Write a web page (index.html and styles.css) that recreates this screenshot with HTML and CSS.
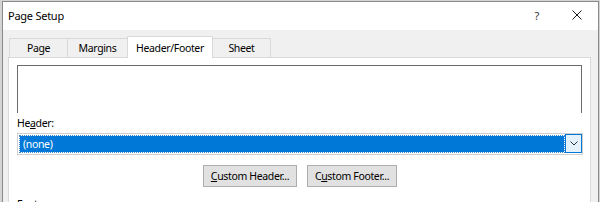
FILE: index.html
```html
<!DOCTYPE html>
<html>
<head>
<meta charset="utf-8">
<link rel="stylesheet" href="styles.css">
</head>
<body>
<div class="window">
  <div class="titlebar">
    <span class="title">Page Setup</span>
    <span class="help">?</span>
    <span class="close">
      <svg width="10" height="10" viewBox="0 0 10 10"><path d="M0.5 0.5 L9.5 9.5 M9.5 0.5 L0.5 9.5" stroke="#1a1a1a" stroke-width="1" fill="none"/></svg>
    </span>
  </div>
  <div class="body">
    <div class="tabs">
      <div class="tab t-page">Page</div>
      <div class="tab t-margins">Margins</div>
      <div class="tab t-hf active">Header/Footer</div>
      <div class="tab t-sheet">Sheet</div>
    </div>
    <div class="panel">
      <div class="preview"></div>
      <div class="label">He<u>a</u>der:</div>
      <div class="select">
        <div class="value"><span>(none)</span></div>
        <div class="arrow">
          <svg width="8" height="5" viewBox="0 0 8 5"><path d="M0.5 0.5 L4 4 L7.5 0.5" stroke="#333" stroke-width="1" fill="none"/></svg>
        </div>
      </div>
      <div class="buttons">
        <div class="btn b-header"><u>C</u>ustom Header...</div>
        <div class="btn b-footer">C<u>u</u>stom Footer...</div>
      </div>
      <div class="label footer-label">Footer:</div>
    </div>
  </div>
</div>
</body>
</html>
```
FILE: styles.css
```css
html, body {
  margin: 0;
  padding: 0;
}
body {
  background: #d4d4d4;
  padding: 1px 1px 0 2px;
  font-family: "Noto Sans", "Open Sans", sans-serif;
  font-size: 10.5px;
  letter-spacing: -0.35px;
  color: #000;
  height: 202px;
  overflow: hidden;
  box-sizing: border-box;
}
.window {
  border: 1px solid #8a8a8a;
  border-bottom: none;
  background: #f0f0f0;
  height: 300px;
}
.titlebar {
  height: 28px;
  background: #fff;
  display: flex;
  align-items: center;
  padding-left: 5px;
}
.title {
  font-size: 11px;
  letter-spacing: -0.25px;
  flex: 1;
  margin-top: -2px;
}
.help {
  font-size: 11px;
  color: #333;
  margin-right: 33px;
  margin-top: -2px;
}
.close {
  display: flex;
  margin-right: 16px;
  margin-top: -2px;
}
.body {
  padding: 0 7px 0 5px;
}
.tabs {
  height: 27px;
  display: flex;
  align-items: flex-end;
  padding-left: 1px;
}
.tab {
  height: 18px;
  border: 1px solid #d9d9d9;
  border-bottom: none;
  background: #f0f0f0;
  display: flex;
  align-items: center;
  justify-content: center;
  color: #000;
  margin-left: -1px;
}
.tab:first-child { margin-left: 0; }
.t-page { width: 57px; }
.t-margins { width: 59px; }
.t-hf { width: 84px; }
.t-sheet { width: 57px; }
.tab.active {
  background: #fff;
  margin-bottom: -1px;
  position: relative;
  z-index: 1;
  height: 21px;
}
.panel {
  background: #fff;
  border: 1px solid #d9d9d9;
  height: 200px;
  padding: 7px 7px 0 8px;
}
.preview {
  height: 47px;
  width: 563px;
  border: 1px solid #6b6b6b;
  border-bottom: none;
  background: #fff;
}
.label {
  height: 20px;
  display: flex;
  align-items: center;
  color: #000;
}
.select {
  width: 563px;
  height: 18px;
  border: 1px solid #d0d0d0;
  display: flex;
  padding: 1px 0 1px 1px;
}
.value {
  flex: 1;
  padding: 1px;
  display: flex;
}
.value span {
  flex: 1;
  background: #0078d7;
  color: #fff;
  outline: 1px dotted #3d8ad0;
  display: flex;
  align-items: center;
  padding-left: 3px;
}
.arrow {
  width: 15px;
  height: 17px;
  margin-top: -1px;
  border: 1px solid #0078d7;
  background: #e5f1fb;
  display: flex;
  align-items: center;
  justify-content: center;
}
.buttons {
  display: flex;
  justify-content: center;
  gap: 10px;
  margin-top: 10px;
}
.btn {
  height: 20px;
  background: #e1e1e1;
  border: 1px solid #adadad;
  display: flex;
  align-items: center;
  justify-content: center;
  color: #000;
}
.b-header { width: 92px; }
.b-footer { width: 88px; }
.footer-label {
  margin-top: 7px;
}
```
